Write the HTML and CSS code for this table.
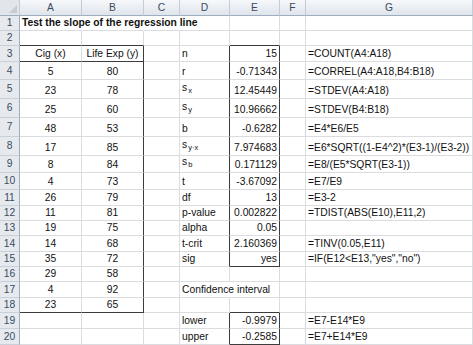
FILE: index.html
```html
<!DOCTYPE html>
<html>
<head>
  <title>Regression slope test</title>
  <link rel="stylesheet" href="styles.css">
</head>
<body>
  <table class="sheet">
    <colgroup>
      <col class="w-rh">
      <col class="w-a">
      <col class="w-b">
      <col class="w-c">
      <col class="w-d">
      <col class="w-e">
      <col class="w-f">
      <col class="w-g">
    </colgroup>
    <thead>
      <tr class="h16">
        <th class="corner"><span class="corner-mark"></span></th>
        <th>A</th><th>B</th><th>C</th><th>D</th><th>E</th><th>F</th><th>G</th>
      </tr>
    </thead>
    <tbody>
      <tr class="h15">
        <th>1</th>
        <td class="title ov">Test the slope of the regression line</td>
        <td class="ov"></td><td class="ov"></td><td></td><td></td><td></td><td></td>
      </tr>
      <tr class="h15">
        <th>2</th>
        <td class="bB"></td><td class="bB"></td><td></td><td></td><td class="bB"></td><td></td><td></td>
      </tr>
      <tr class="h16">
        <th>3</th>
        <td class="c bB">Cig (x)</td><td class="c bB bR">Life Exp (y)</td><td></td>
        <td class="bR">n</td><td class="num bR">15</td><td></td><td>=COUNT(A4:A18)</td>
      </tr>
      <tr class="h18">
        <th>4</th>
        <td class="c">5</td><td class="c bR">80</td><td></td>
        <td class="bR">r</td><td class="num bR">-0.71343</td><td></td><td>=CORREL(A4:A18,B4:B18)</td>
      </tr>
      <tr class="h19">
        <th>5</th>
        <td class="c">23</td><td class="c bR">78</td><td></td>
        <td class="bR">s<span class="sub">x</span></td><td class="num bR">12.45449</td><td></td><td>=STDEV(A4:A18)</td>
      </tr>
      <tr class="h19">
        <th>6</th>
        <td class="c">25</td><td class="c bR">60</td><td></td>
        <td class="bR">s<span class="sub">y</span></td><td class="num bR">10.96662</td><td></td><td>=STDEV(B4:B18)</td>
      </tr>
      <tr class="h19">
        <th>7</th>
        <td class="c">48</td><td class="c bR">53</td><td></td>
        <td class="bR">b</td><td class="num bR">-0.6282</td><td></td><td>=E4*E6/E5</td>
      </tr>
      <tr class="h19">
        <th>8</th>
        <td class="c">17</td><td class="c bR">85</td><td></td>
        <td class="bR">s<span class="sub">y·x</span></td><td class="num bR">7.974683</td><td></td><td>=E6*SQRT((1-E4^2)*(E3-1)/(E3-2))</td>
      </tr>
      <tr class="h17">
        <th>9</th>
        <td class="c">8</td><td class="c bR">84</td><td></td>
        <td class="bR">s<span class="sub">b</span></td><td class="num bR">0.171129</td><td></td><td>=E8/(E5*SQRT(E3-1))</td>
      </tr>
      <tr class="h17">
        <th>10</th>
        <td class="c">4</td><td class="c bR">73</td><td></td>
        <td class="bR">t</td><td class="num bR">-3.67092</td><td></td><td>=E7/E9</td>
      </tr>
      <tr class="h16">
        <th>11</th>
        <td class="c">26</td><td class="c bR">79</td><td></td>
        <td class="bR">df</td><td class="num bR">13</td><td></td><td>=E3-2</td>
      </tr>
      <tr class="h15">
        <th>12</th>
        <td class="c">11</td><td class="c bR">81</td><td></td>
        <td class="bR">p-value</td><td class="num bR">0.002822</td><td></td><td>=TDIST(ABS(E10),E11,2)</td>
      </tr>
      <tr class="h15">
        <th>13</th>
        <td class="c">19</td><td class="c bR">75</td><td></td>
        <td class="bR">alpha</td><td class="num bR">0.05</td><td></td><td></td>
      </tr>
      <tr class="h16">
        <th>14</th>
        <td class="c">14</td><td class="c bR">68</td><td></td>
        <td class="bR">t-crit</td><td class="num bR">2.160369</td><td></td><td>=TINV(0.05,E11)</td>
      </tr>
      <tr class="h15">
        <th>15</th>
        <td class="c">35</td><td class="c bR">72</td><td></td>
        <td class="bR">sig</td><td class="num bR bB">yes</td><td></td><td>=IF(E12&lt;E13,"yes","no")</td>
      </tr>
      <tr class="h15">
        <th>16</th>
        <td class="c">29</td><td class="c bR">58</td><td></td>
        <td></td><td></td><td></td><td></td>
      </tr>
      <tr class="h16">
        <th>17</th>
        <td class="c">4</td><td class="c bR">92</td><td></td>
        <td class="ov">Confidence interval</td><td></td><td></td><td></td>
      </tr>
      <tr class="h15">
        <th>18</th>
        <td class="c bB">23</td><td class="c bR bB">65</td><td></td>
        <td></td><td class="bB"></td><td></td><td></td>
      </tr>
      <tr class="h16">
        <th>19</th>
        <td></td><td></td><td></td>
        <td class="bR">lower</td><td class="num bR">-0.9979</td><td></td><td>=E7-E14*E9</td>
      </tr>
      <tr class="h16">
        <th>20</th>
        <td></td><td></td><td></td>
        <td class="bR">upper</td><td class="num bR bB">-0.2585</td><td></td><td>=E7+E14*E9</td>
      </tr>
    </tbody>
  </table>
</body>
</html>
```

FILE: styles.css
```css
body {
  margin: 0;
  background-color: white;
  font-family: "Liberation Sans", Arial, sans-serif;
  overflow: hidden;
}
.sheet {
  table-layout: fixed;
  border-collapse: separate;
  border-spacing: 0;
  width: 473px;
  font-size: 10.3px;
  color: #111;
}
.w-rh { width: 20px; }
.w-a { width: 62px; }
.w-b { width: 62px; }
.w-c { width: 36px; }
.w-d { width: 50px; }
.w-e { width: 50px; }
.w-f { width: 26px; }
.w-g { width: 167px; }

.h15 { height: 15px; }
.h16 { height: 16px; }
.h17 { height: 17px; }
.h18 { height: 18px; }
.h19 { height: 19px; }

td {
  padding: 0 2px 1px 2px;
  border-right: 1px solid #dadcdf;
  border-bottom: 1px solid #dadcdf;
  white-space: nowrap;
  vertical-align: bottom;
  line-height: 12px;
  text-align: left;
}

/* column letters */
thead th {
  padding: 0;
  font-weight: normal;
  color: #3a4a5e;
  line-height: 12px;
  background: linear-gradient(#f6f8fb, #dfe5ec);
  border-right: 1px solid #c3ccd7;
  border-bottom: 1px solid #9eadbf;
  text-align: center;
  vertical-align: middle;
}
/* row numbers */
tbody th {
  padding: 0;
  font-weight: normal;
  color: #3a4a5e;
  background-color: #e6eaef;
  border-right: 1px solid #9eadbf;
  border-bottom: 1px solid #c8d0da;
  text-align: center;
  vertical-align: middle;
  line-height: 12px;
}
.corner {
  position: relative;
  background: #e2e6eb;
}
.corner-mark {
  position: absolute;
  right: 2px;
  bottom: 2px;
  width: 0;
  height: 0;
  border-left: 8px solid transparent;
  border-bottom: 8px solid #c5ccd4;
}

.title {
  font-weight: bold;
}
.c { text-align: center; }
.num { text-align: right; }
.ov { border-right-color: transparent; }

/* drawn cell borders */
.bR { border-right-color: #3c3c3c; }
.bB { border-bottom-color: #3c3c3c; }

.sub {
  font-size: 7.5px;
  vertical-align: -2px;
  margin-left: 1px;
}
```
